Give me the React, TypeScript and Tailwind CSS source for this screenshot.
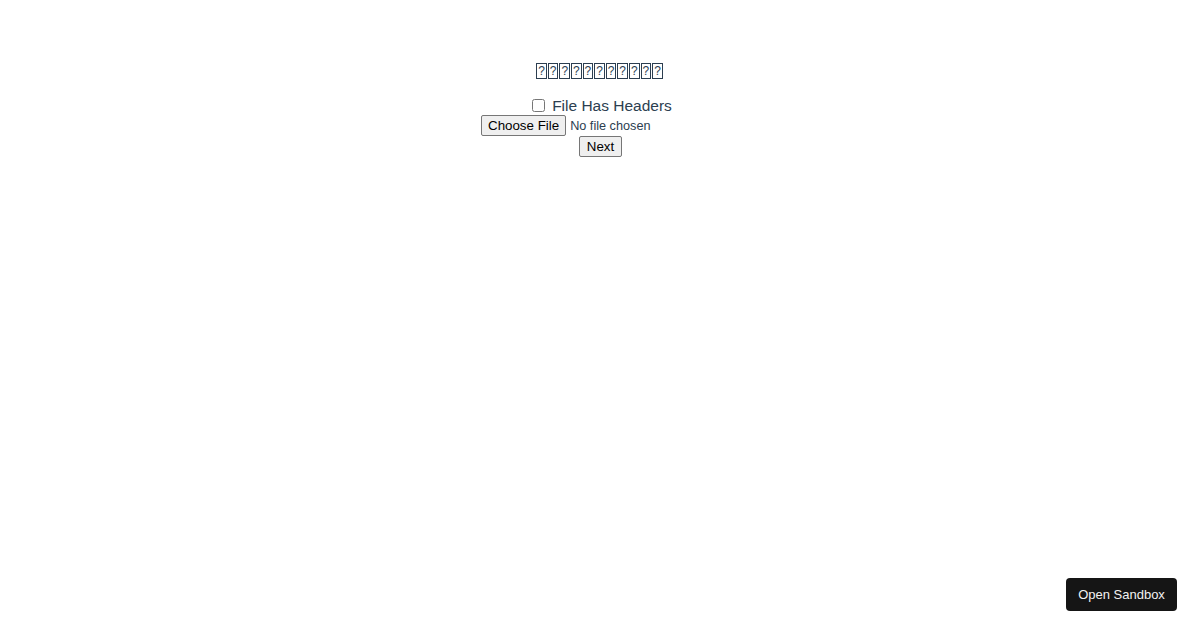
const TOFU_COUNT = 11

function Tofu() {
  return (
    <span className="mr-[1px] inline-flex h-[16px] w-[10.6px] items-center justify-center border border-[#2c3e50] text-[12px] leading-none text-[#2c3e50]">
      ?
    </span>
  )
}

export default function App() {
  return (
    <div className="min-h-screen bg-white">
      <div
        className="pt-[60px] text-center text-[#2c3e50]"
        style={{ fontFamily: '"Liberation Sans", Arial, sans-serif' }}
      >
        <h3 className="mb-[14px] flex h-[22px] items-center justify-center font-normal">
          {Array.from({ length: TOFU_COUNT }).map((_, i) => (
            <Tofu key={i} />
          ))}
        </h3>
        <div className="flex flex-col items-center">
          <label className="flex items-center pl-[4px] text-[15.5px] leading-[19px]">
            <input type="checkbox" className="mr-[7px] h-[13px] w-[13px]" />
            File Has Headers
          </label>
          <input
            type="file"
            className="h-[21px] w-[238px] text-[12.7px] text-[#2c3e50] file:mr-[4px] file:h-[21px] file:rounded-[2px] file:border file:border-[#767676] file:bg-[#efefef] file:px-[6px] file:text-[13.33px] file:text-black"
          />
          <button className="ml-[1px] h-[21px] rounded-[2px] border border-[#767676] bg-[#efefef] px-[7px] text-[13.33px] text-black">
            Next
          </button>
        </div>
      </div>
      <button
        className="fixed bottom-[19px] right-[23px] h-[33px] w-[111px] rounded-[4px] bg-[#151515] text-[13px] text-[#f2f2f2]"
        style={{ fontFamily: '"Liberation Sans", Arial, sans-serif' }}
      >
        Open Sandbox
      </button>
    </div>
  )
}
